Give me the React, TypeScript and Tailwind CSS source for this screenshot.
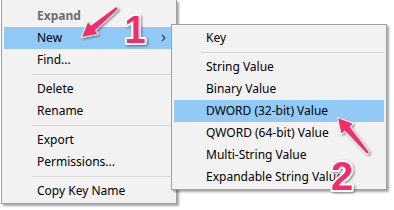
import React from "react";

const font = { fontFamily: '"Noto Sans", "Liberation Sans", sans-serif' };

function Row({ label, active, bold, disabled, arrow, pl }: { label: string; active?: boolean; bold?: boolean; disabled?: boolean; arrow?: boolean; pl: string }) {
  return (
    <div
      className={`relative flex h-[22px] items-center text-[12px] leading-none ${pl} ${active ? "bg-[#91c9f7]" : ""} ${bold ? "font-bold" : ""} ${disabled ? "text-[#6d6d6d]" : "text-black"}`}
    >
      <span className="-mt-[1px]">{label}</span>
      {arrow && (
        <svg className="absolute right-[8px] top-[7px]" width="5" height="8" viewBox="0 0 5 8">
          <path d="M0.8 0.8 L4 4 L0.8 7.2" fill="none" stroke="#333" strokeWidth="1.1" />
        </svg>
      )}
    </div>
  );
}

function Sep({ ml }: { ml: string }) {
  return (
    <div className={`flex h-[7px] items-center ${ml}`}>
      <div className="h-px w-full bg-[#d7d7d7]" />
    </div>
  );
}

export default function App() {
  return (
    <div className="relative h-[210px] w-[394px] overflow-hidden bg-white" style={font}>
      {/* Main menu */}
      <div className="ml-[1px] w-[176px] border-x border-b border-[#a0a0a0] bg-[#f2f2f2] px-[2px] pb-[1px] pt-[5px] shadow-[2px_2px_2px_rgba(0,0,0,0.35)]">
        <Row label="Expand" bold disabled pl="pl-[33px]" />
        <Row label="New" active arrow pl="pl-[33px]" />
        <Row label="Find..." pl="pl-[33px]" />
        <Sep ml="ml-[28px]" />
        <Row label="Delete" pl="pl-[33px]" />
        <Row label="Rename" pl="pl-[33px]" />
        <Sep ml="ml-[28px]" />
        <Row label="Export" pl="pl-[33px]" />
        <Row label="Permissions..." pl="pl-[33px]" />
        <Sep ml="ml-[28px]" />
        <Row label="Copy Key Name" pl="pl-[33px]" />
      </div>

      {/* Submenu */}
      <div className="absolute left-[171px] top-[24px] w-[216px] border border-[#a0a0a0] bg-[#f2f2f2] px-[2px] pb-[1px] pt-[2px] shadow-[2px_2px_2px_rgba(0,0,0,0.35)]">
        <Row label="Key" pl="pl-[32px]" />
        <Sep ml="ml-[27px]" />
        <Row label="String Value" pl="pl-[32px]" />
        <Row label="Binary Value" pl="pl-[32px]" />
        <Row label="DWORD (32-bit) Value" active pl="pl-[32px]" />
        <Row label="QWORD (64-bit) Value" pl="pl-[32px]" />
        <Row label="Multi-String Value" pl="pl-[32px]" />
        <Row label="Expandable String Value" pl="pl-[32px]" />
      </div>

      {/* Annotations */}
      <svg className="pointer-events-none absolute left-0 top-0" width="394" height="210" viewBox="0 0 394 210">
        <defs>
          <filter id="ds" x="-20%" y="-20%" width="140%" height="140%">
            <feDropShadow dx="1.2" dy="1.2" stdDeviation="0.9" floodColor="#000" floodOpacity="0.45" />
          </filter>
        </defs>
        <g filter="url(#ds)" fill="#f72a6b" stroke="#fff" strokeWidth="2" strokeLinejoin="round" style={{ paintOrder: "stroke" }}>
          <polygon points="116.2,7.1 117.8,8.9 94.7,30.4 97.6,33.9 82,37 88.0,22.3 90.9,25.8" />
          <polygon points="367.1,153.8 368.9,152.2 349.4,126.6 352.8,123.7 338,118 341.4,133.5 344.8,130.6" />
        </g>
        <g filter="url(#ds)" fill="#f72a6b" stroke="#fff" strokeWidth="4" strokeLinejoin="round" style={{ paintOrder: "stroke", fontFamily: '"Liberation Sans", Arial, sans-serif', fontWeight: 700 }}>
          <text x="135" y="43" fontSize="38" textAnchor="middle">1</text>
          <text x="342" y="190" fontSize="40" textAnchor="middle">2</text>
        </g>
      </svg>
    </div>
  );
}
